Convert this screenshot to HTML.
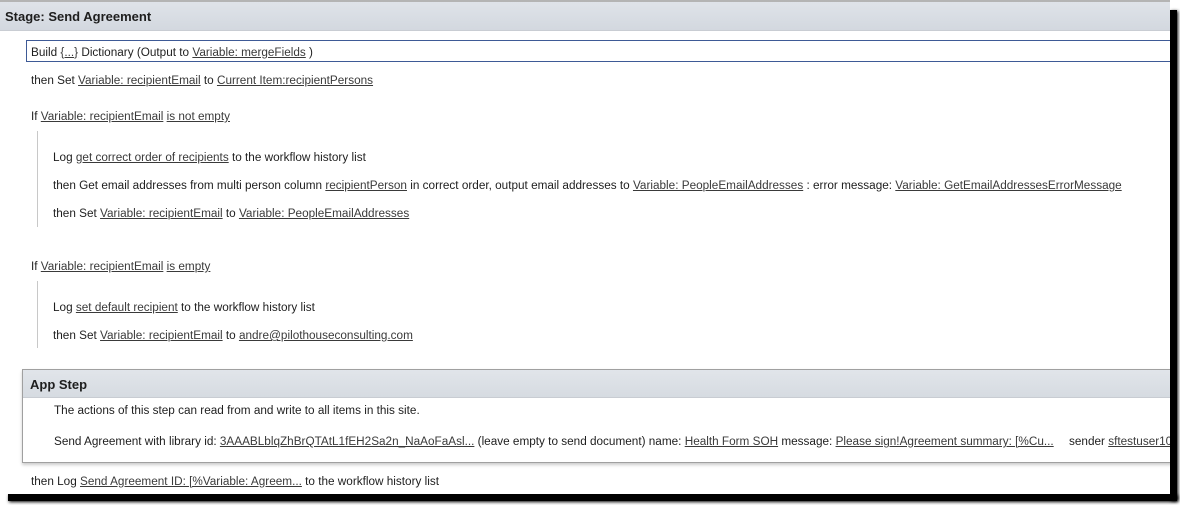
<!DOCTYPE html>
<html><head><style>
body{margin:0;width:1180px;height:505px;background:#fff;position:relative;overflow:hidden;font-family:"Segoe UI","Liberation Sans",sans-serif;font-size:11.75px;color:#1e1e1e}
.shr{position:absolute;left:1170px;top:10px;width:7px;height:490px;background:#000;box-shadow:1px 1px 3px #000}
.shb{position:absolute;left:8px;top:494px;width:1169px;height:7px;background:#000;box-shadow:1px 1px 3px #000}
.page{position:absolute;left:0;top:0;width:1170px;height:494px;background:#fff;overflow:hidden;border-top:2px solid #b4b4b4;box-sizing:border-box}
.hdr{position:absolute;left:0;top:0;width:1170px;height:29px;background:linear-gradient(#dfe3e9,#d3d8df);border-bottom:1px solid #c9cdd3;font-weight:bold;font-size:13px;line-height:30px;padding-left:5px;box-sizing:border-box}
.l{position:absolute;white-space:nowrap;line-height:14px;margin-top:1px}
u{color:#3a3a3a}
.box{position:absolute;left:26px;top:38px;width:1150px;height:22px;border:1px solid #3e5a96;box-sizing:border-box}
.app{position:absolute;left:22px;top:367px;width:1160px;height:94px;border:1px solid #a0a0a0;box-sizing:border-box;box-shadow:0 2px 3px #ccc}
.apph{height:27px;background:linear-gradient(#e1e5ea,#d6dbe1);border-bottom:1px solid #c8ccd2;font-weight:bold;font-size:13px;line-height:29px;padding-left:7px}
.vl{position:absolute;left:37px;width:1px;background:#c8c8c8}
</style></head><body>
<div class="shr"></div><div class="shb"></div>
<div class="page">
<div class="hdr">Stage: Send Agreement</div>
<div class="box"></div>
<div class="l" style="left:31px;top:43px">Build <u>{...}</u> Dictionary (Output to <u>Variable: mergeFields</u> )</div>
<div class="l" style="left:31px;top:71px">then Set <u>Variable: recipientEmail</u> to <u>Current Item:recipientPersons</u></div>
<div class="l" style="left:31px;top:107px">If <u>Variable: recipientEmail</u> <u>is not empty</u></div>
<div class="vl" style="top:129px;height:96px"></div>
<div class="l" style="left:53px;top:148px">Log <u>get correct order of recipients</u> to the workflow history list</div>
<div class="l" style="left:53px;top:176px">then Get email addresses from multi person column <u>recipientPerson</u> in correct order, output email addresses to <u>Variable: PeopleEmailAddresses</u> : error message: <u>Variable: GetEmailAddressesErrorMessage</u></div>
<div class="l" style="left:53px;top:204px">then Set <u>Variable: recipientEmail</u> to <u>Variable: PeopleEmailAddresses</u></div>
<div class="l" style="left:31px;top:257px">If <u>Variable: recipientEmail</u> <u>is empty</u></div>
<div class="vl" style="top:279px;height:67px"></div>
<div class="l" style="left:53px;top:298px">Log <u>set default recipient</u> to the workflow history list</div>
<div class="l" style="left:53px;top:326px">then Set <u>Variable: recipientEmail</u> to <u>andre@pilothouseconsulting.com</u></div>
<div class="app"><div class="apph">App Step</div></div>
<div class="l" style="left:54px;top:401px">The actions of this step can read from and write to all items in this site.</div>
<div class="l" style="left:54px;top:432px">Send Agreement with library id: <u>3AAABLblqZhBrQTAtL1fEH2Sa2n_NaAoFaAsl...</u> (leave empty to send document) name: <u>Health Form SOH</u> message: <u>Please sign!Agreement summary: [%Cu...</u></div>
<div class="l" style="left:1069px;top:432px">sender <u>sftestuser10</u></div>
<div class="l" style="left:31px;top:472px">then Log <u>Send Agreement ID: [%Variable: Agreem...</u> to the workflow history list</div>
</div>
</body></html>
